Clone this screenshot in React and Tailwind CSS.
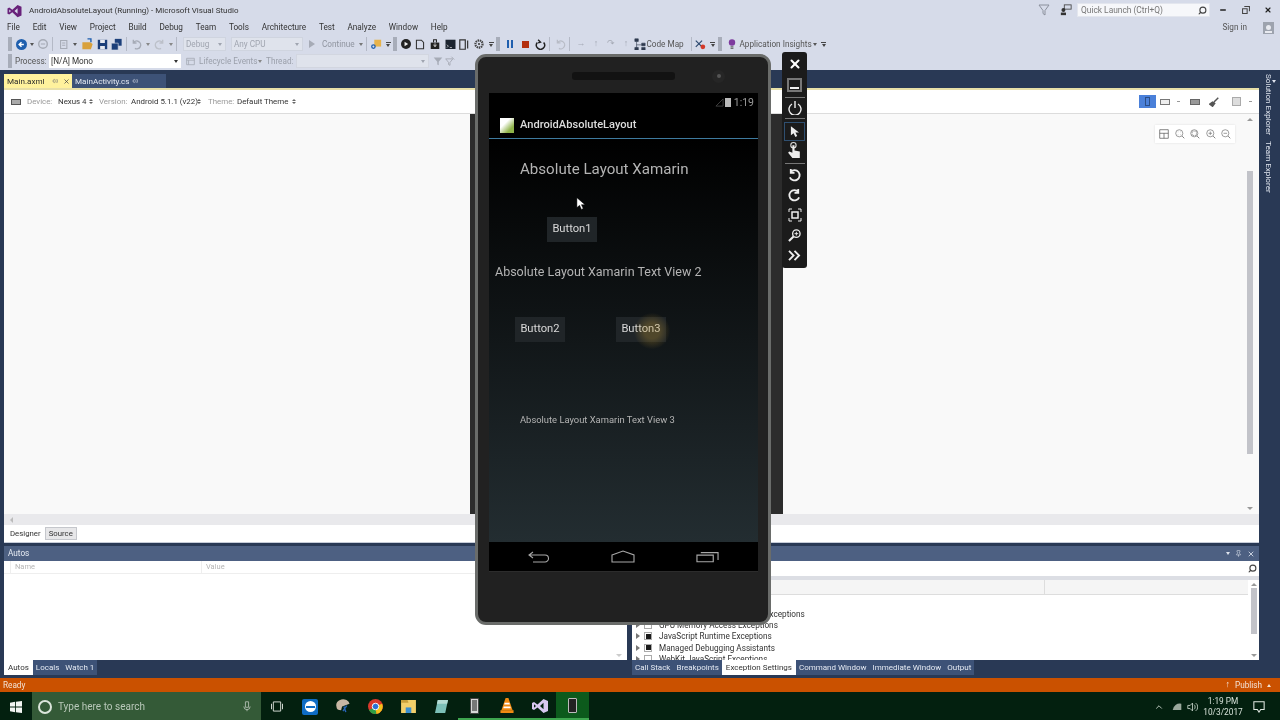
import { ChevronUp, Search, Pin, X, Minus } from 'lucide-react';

// small dropdown caret used all over the VS toolbars
function Caret({ className = 'ml-[3px]', color = 'border-t-[#555]' }) {
  return <span className={`${className} inline-block shrink-0 w-0 h-0 border-x-[2.5px] border-x-transparent border-t-[3px] ${color}`} />;
}

function OverflowCaret({ className = '' }) {
  return (
    <span className={`flex flex-col items-center gap-[1px] w-[6px] shrink-0 ${className}`}>
      <span className="w-[5px] h-[1px] bg-[#444]" />
      <Caret className="" color="border-t-[#444]" />
    </span>
  );
}

function Grip({ className = '' }) {
  return <span className={`w-[4px] h-[14px] shrink-0 bg-[radial-gradient(#a4aab6_0.7px,transparent_0.8px)] bg-[length:2px_2px] ${className}`} />;
}

function Sep({ className = '' }) {
  return <span className={`w-px h-[14px] bg-[#b4b9c6] shrink-0 ${className}`} />;
}

// size always comes from the caller
function Glyph({ className = '', children, box = '0 0 14 14' }) {
  return (
    <svg viewBox={box} className={`shrink-0 ${className}`}>
      {children}
    </svg>
  );
}

function UpDown({ className = 'ml-[5px]' }) {
  return (
    <span className={`flex flex-col gap-[1px] shrink-0 ${className}`}>
      <span className="w-0 h-0 border-x-[2px] border-x-transparent border-b-[2px] border-b-[#666]" />
      <span className="w-0 h-0 border-x-[2px] border-x-transparent border-t-[2px] border-t-[#666]" />
    </span>
  );
}

function VsLogo({ className = '', fill = '#68217a' }) {
  return (
    <svg viewBox="0 0 16 16" className={className}>
      <path fill={fill} d="M11.5 1 16 3v10l-4.5 2-6-5.6L2 12l-2-1V5l2-1 3.5 2.6zM2 6.2v3.6L4 8zm9.5-1.4L8 8l3.500 3.200z" />
    </svg>
  );
}

function TitleBar() {
  return (
    <div className="h-[20px] flex items-center pl-[7px]">
      <VsLogo className="w-[15px] h-[14px] mt-[2px]" />
      <span className="ml-[7px] mt-[3px] text-[8.030px] text-[#333]">AndroidAbsoluteLayout (Running) - Microsoft Visual Studio</span>
      <div className="ml-auto flex items-center">
        <Glyph className="mr-[9px] w-[14px] h-[14px]">
          <path d="M2 2h10L8 7.500V12L6 10.500V7.500z" fill="none" stroke="#8b909c" />
        </Glyph>
        <Glyph className="mr-[5px] w-[12px] h-[12px]">
          <rect x="5" y="1" width="8" height="5" fill="none" stroke="#444" />
          <circle cx="4" cy="7" r="2.300" fill="#333" />
          <rect x="1" y="10" width="6" height="3" fill="#333" />
        </Glyph>
        <div className="w-[133px] h-[14px] bg-[#f6f7fa] border border-[#e3e6ee] flex items-center pl-[3px] pr-[2px] text-[8.400px] text-[#777]">
          Quick Launch (Ctrl+Q)
          <Search className="ml-auto w-[9px] h-[9px] text-[#444] -scale-x-100" strokeWidth={3} />
        </div>
        <Minus className="ml-[9px] w-[8px] h-[8px] text-[#222]" strokeWidth={4} />
        <Glyph className="ml-[15px] w-[8px] h-[8px]">
          <path d="M4 1h9v8M1 5h8v8H1z" fill="none" stroke="#444" strokeWidth="1.800" />
        </Glyph>
        <X className="ml-[14px] mr-[8px] w-[8px] h-[8px] text-[#222]" strokeWidth={3.500} />
      </div>
    </div>
  );
}

const menus = ['File', 'Edit', 'View', 'Project', 'Build', 'Debug', 'Team', 'Tools', 'Architecture', 'Test', 'Analyze', 'Window', 'Help'];

function MenuBar() {
  return (
    <div className="h-[15px] flex items-center pl-[7px] text-[8.200px] text-[#333]">
      <div className="flex gap-[12.800px]">
        {menus.map((m) => <span key={m}>{m}</span>)}
      </div>
      <span className="ml-auto text-[#555]">Sign in</span>
      <span className="ml-[16px] mr-[6px] w-[11px] h-[12px] bg-[#9da3ae] flex flex-col items-center justify-end">
        <span className="w-[5px] h-[5px] rounded-full bg-[#e8eaf0] mb-[1px]" />
        <span className="w-[7px] h-[2px] bg-[#e8eaf0] mb-[1px]" />
      </span>
    </div>
  );
}

function Combo({ className = '', children }) {
  return (
    <div className={`h-[14px] bg-[#dfe3ec] border border-[#cfd4df] flex items-center pl-[2px] pr-[3px] text-[#a0a5b0] shrink-0 ${className}`}>
      {children}
      <Caret className="ml-auto" color="border-t-[#a0a5b0]" />
    </div>
  );
}

function Toolbar() {
  return (
    <div className="h-[16px] mt-[1px] flex items-center pl-[8px] text-[8.200px] text-[#555]">
      <Grip />
      <Glyph className="ml-[3.500px] w-[11px] h-[11px]">
        <circle cx="7" cy="7" r="7" fill="#1f5fae" />
        <path d="M10 7H4.500M7 4 4 7l3 3" stroke="#fff" strokeWidth="1.800" fill="none" />
      </Glyph>
      <Caret className="ml-[3px]" />
      <Glyph className="ml-[4.500px] w-[10px] h-[10px]">
        <circle cx="7" cy="7" r="6" fill="none" stroke="#a6abb6" strokeWidth="2" />
        <path d="M4 7h6" stroke="#a6abb6" strokeWidth="1.500" />
      </Glyph>
      <Sep className="ml-[4px]" />
      <Glyph className="ml-[5.500px] w-[11px] h-[11px]">
        <path d="M2 2h8v10H2zM4 5h4M4 8h4" fill="none" stroke="#a6abb6" strokeWidth="1.400" />
      </Glyph>
      <Caret className="ml-[3px]" />
      <Glyph className="ml-[4px] w-[13px] h-[12px]">
        <path d="M1 5h9l3 2-2 6H1z" fill="#d9a13c" />
        <path d="M7 1 11 1v4" fill="none" stroke="#1f5fae" strokeWidth="1.600" />
      </Glyph>
      <Glyph className="ml-[3px] w-[11px] h-[11px]">
        <path d="M1 1h12v12H1z" fill="#1c3f7a" />
        <path d="M4 1h6v4H4zM4 9h6v4H4z" fill="#e7eaf1" />
      </Glyph>
      <Glyph className="ml-[2px] w-[13px] h-[12px]">
        <path d="M5 1h8v8H5z" fill="#1c3f7a" />
        <path d="M1 6h8v8H1z" fill="#1c3f7a" stroke="#e0e4ec" strokeWidth=".7" />
      </Glyph>
      <Sep className="ml-[3.500px]" />
      <Glyph className="ml-[3.500px] w-[11px] h-[11px]">
        <path d="M3 5a5 5 0 1 1 2 7M3 1v4h4" fill="none" stroke="#a6abb6" strokeWidth="1.800" />
      </Glyph>
      <Caret className="ml-[4px]" color="border-t-[#888]" />
      <Glyph className="ml-[4px] w-[11px] h-[11px]">
        <path d="M11 5a5 5 0 1 0-2 7M11 1v4H7" fill="none" stroke="#bcc0c9" strokeWidth="1.800" />
      </Glyph>
      <Caret className="ml-[4px]" color="border-t-[#888]" />
      <Sep className="ml-[3.500px]" />
      <Combo className="ml-[6px] w-[43px]">Debug</Combo>
      <Combo className="ml-[5px] w-[72px]">Any CPU</Combo>
      <span className="ml-[6px] shrink-0 w-0 h-0 border-y-[4px] border-y-transparent border-l-[6px] border-l-[#a6abb6]" />
      <span className="ml-[7px] w-[33px] shrink-0 text-[#8f949f]">Continue</span>
      <Caret className="ml-[3.500px]" color="border-t-[#777]" />
      <Sep className="ml-[3.500px]" />
      <Glyph className="ml-[3px] w-[12px] h-[12px]">
        <path d="M5 2h8v8H5z" fill="#e7b34a" />
        <circle cx="4" cy="10" r="2" fill="none" stroke="#1f5fae" strokeWidth="1.500" />
      </Glyph>
      <OverflowCaret className="ml-[3px]" />
      <Grip className="ml-[2px]" />
      <Glyph className="ml-[4px] w-[10px] h-[10px]">
        <circle cx="7" cy="7" r="7" fill="#222" />
        <path d="M5 4l5 3-5 3z" fill="#eee" />
      </Glyph>
      <Glyph className="ml-[4px] w-[10px] h-[11px]">
        <path d="M2 1h7l3 3v9H2z" fill="none" stroke="#333" strokeWidth="1.500" />
      </Glyph>
      <Glyph className="ml-[5px] w-[10px] h-[10px]">
        <path d="M1 5h12v9H1z" fill="#222" />
        <path d="M5 5V1h4v4" fill="none" stroke="#222" strokeWidth="1.500" />
        <path d="M7 6v4M5 8l2 3 2-3" stroke="#fff" fill="none" />
      </Glyph>
      <Glyph className="ml-[4.500px] w-[11px] h-[10px]">
        <rect width="14" height="13" y="1" fill="#1c2430" />
        <path d="M2 8l2 2-2 2M6 12h3" stroke="#eee" fill="none" />
      </Glyph>
      <Glyph className="ml-[3px] w-[11px] h-[11px]">
        <path d="M1 1h7v12H1zM11 2v10" fill="none" stroke="#333" strokeWidth="1.500" />
      </Glyph>
      <Glyph className="ml-[4.500px] w-[10px] h-[10px]">
        <circle cx="7" cy="7" r="5" fill="none" stroke="#444" strokeWidth="3" strokeDasharray="2 1" />
        <circle cx="7" cy="7" r="1.500" fill="#444" />
      </Glyph>
      <OverflowCaret className="ml-[4px]" />
      <Grip className="ml-[2px]" />
      <span className="ml-[7px] flex gap-[2px] shrink-0">
        <span className="w-[2px] h-[8px] bg-[#1f5fae]" />
        <span className="w-[2px] h-[8px] bg-[#1f5fae]" />
      </span>
      <span className="ml-[8.500px] w-[7px] h-[7px] bg-[#b3300f] shrink-0" />
      <Glyph className="ml-[6px] w-[11px] h-[11px]">
        <path d="M3 4.500a5.200 5.200 0 1 0 8 0M4 1l3 3-3 1" fill="none" stroke="#222" strokeWidth="1.800" />
      </Glyph>
      <Sep className="ml-[3.500px]" />
      <Glyph className="ml-[4.500px] w-[11px] h-[11px]">
        <path d="M3 5a5 5 0 1 1 2 7M3 1v4h4" fill="none" stroke="#b8bcc6" strokeWidth="1.600" />
      </Glyph>
      <Sep className="ml-[3.500px]" />
      <span className="ml-[3.500px] w-[60px] shrink-0 grid grid-cols-4 justify-items-center text-[#a6abb6] text-[9px]">
        <span>→</span><span>↑</span><span>↷</span><span>↑</span>
      </span>
      <Glyph className="w-[12px] h-[12px]">
        <path d="M1 1h4v3H1zM9 6h4v3H9zM1 11h4v3H1zM9 11h4v3H9zM3 4v9M3 8h6" fill="#2f3a4f" stroke="#2f3a4f" strokeWidth=".7" />
      </Glyph>
      <span className="ml-[1px] w-[36px] shrink-0 whitespace-nowrap text-[#555]">Code Map</span>
      <Sep className="ml-[8px]" />
      <Glyph className="ml-[3.500px] w-[11px] h-[11px]">
        <path d="M1 2l8 8M9 2l-8 8" stroke="#2d4a70" strokeWidth="1.500" />
        <circle cx="10" cy="10" r="3" fill="#d33a2a" />
      </Glyph>
      <OverflowCaret className="ml-[3.500px]" />
      <Grip className="ml-[2px]" />
      <Glyph className="ml-[5px] w-[10px] h-[12px]">
        <circle cx="7" cy="5" r="4.500" fill="#7d3a9e" />
        <path d="M5 11h4M5 13h4" stroke="#555" strokeWidth="1.400" />
      </Glyph>
      <span className="ml-[3px] w-[70px] shrink-0 whitespace-nowrap text-[#555]">Application Insights</span>
      <Caret className="ml-[3.500px]" />
      <OverflowCaret className="ml-[3.500px]" />
    </div>
  );
}

function ProcessBar() {
  return (
    <div className="h-[14px] mt-[2px] flex items-center pl-[8px] text-[8.200px] text-[#555]">
      <Grip />
      <span className="ml-[3px] w-[29px] shrink-0">Process:</span>
      <div className="ml-[5px] w-[132px] h-[14px] bg-white flex items-center pl-[2px] pr-[3px] text-[#333] shrink-0">
        [N/A] Mono
        <Caret className="ml-auto" color="border-t-[#333]" />
      </div>
      <Glyph className="ml-[5px] w-[9px] h-[9px]">
        <path d="M1 2h12v10H1zM1 5h12M4 5v7" fill="none" stroke="#a6abb6" strokeWidth="1.300" />
      </Glyph>
      <span className="ml-[4px] w-[55px] shrink-0 whitespace-nowrap text-[#9ba0ab]">Lifecycle Events</span>
      <Caret className="ml-[3.500px]" color="border-t-[#888]" />
      <span className="ml-[4.500px] w-[26px] shrink-0 text-[#9ba0ab]">Thread:</span>
      <div className="ml-[4px] w-[133px] h-[14px] bg-[#dfe3ec] border border-[#d2d6e0] flex items-center pr-[3px] shrink-0">
        <Caret className="ml-auto" color="border-t-[#a0a5b0]" />
      </div>
      <Glyph className="ml-[4px] w-[10px] h-[10px]">
        <path d="M1 2h12L8 8v5L6 12V8z" fill="#a6abb6" />
      </Glyph>
      <Glyph className="ml-[2px] w-[10px] h-[10px]">
        <path d="M1 4h10L7 9v4L5 12V9zM9 1l4 4" fill="none" stroke="#a6abb6" strokeWidth="1.300" />
      </Glyph>
    </div>
  );
}

function Tabs() {
  return (
    <div className="h-[18px] bg-[#293955] flex items-end pl-[4px] pr-[23px] text-[8.100px]">
      <div className="w-[68px] h-[14px] bg-[#fff29d] flex items-center pl-[3px] text-[#2b2b2b]">
        <span className="w-[39px]">Main.axml</span>
        <Pin className="ml-[6px] w-[6px] h-[6px] text-[#777] rotate-90" />
        <X className="ml-[5px] w-[7px] h-[7px] text-[#444]" strokeWidth={2.500} />
      </div>
      <div className="w-[94px] h-[14px] bg-[#3d5277] flex items-center pl-[3px] text-[#e4e9f2]">
        <span className="w-[55px]">MainActivity.cs</span>
        <Pin className="ml-[2px] w-[6px] h-[6px] text-[#d5dbe7] rotate-90" />
      </div>
      <Caret className="ml-auto mb-[5px] mr-[-19px]" color="border-t-[#dfe4ee]" />
    </div>
  );
}

function DesignBar() {
  return (
    <div className="h-[26px] bg-white border-t-2 border-[#e8e0a8] border-b border-b-[#dcdcdc] flex items-center pl-[7px] pr-[7.500px] text-[7.900px] text-[#333] whitespace-nowrap">
      <span className="w-[10px] h-[6px] border border-[#555] bg-[#aaa] shrink-0" />
      <span className="ml-[6px] w-[23px] shrink-0 text-[#999]">Device:</span>
      <span className="ml-[8px] w-[27px] shrink-0">Nexus 4</span>
      <UpDown className="ml-[4px]" />
      <span className="ml-[6px] w-[27px] shrink-0 text-[#999]">Version:</span>
      <span className="ml-[5px] w-[63px] shrink-0">Android 5.1.1 (v22)</span>
      <UpDown className="ml-[3px]" />
      <span className="ml-[7px] w-[24px] shrink-0 text-[#999]">Theme:</span>
      <span className="ml-[5px] w-[49px] shrink-0">Default Theme</span>
      <UpDown className="ml-[6px]" />
      <div className="ml-auto flex items-center">
        <span className="w-[17px] h-[13px] bg-[#4a80d9] flex items-center justify-center">
          <span className="w-[5px] h-[9px] border border-[#2a4d85]" />
        </span>
        <span className="ml-[4px] w-[10px] h-[6px] border border-[#777] bg-[#eee]" />
        <span className="ml-[7px] w-[3px] h-px bg-[#999]" />
        <span className="ml-[10px] w-[10px] h-[6px] border border-[#666] bg-[#999]" />
        <Glyph className="ml-[9px] w-[10px] h-[10px]">
          <path d="M13 1 7 7M8 9l-3 4-4-3 4-3z" stroke="#555" strokeWidth="2" fill="#555" />
        </Glyph>
        <span className="ml-[12.500px] w-[9px] h-[9px] border border-[#aaa] bg-[#ddd]" />
        <span className="ml-[8px] w-[3px] h-px bg-[#999]" />
      </div>
    </div>
  );
}

function ZoomGlyph({ mark }) {
  return (
    <svg viewBox="0 0 14 14" className="w-[10px] h-[10px]">
      <circle cx="6" cy="6" r="5" fill="none" stroke="#777" />
      <path d="m10 10 3 3" stroke="#777" strokeWidth="1.300" />
      {mark}
    </svg>
  );
}

function Canvas() {
  return (
    <div className="relative flex-1 min-h-0 bg-[#f9f9f9] flex">
      <div className="ml-[466px] w-[313px] bg-[#2c2c2c]" />
      <div className="absolute right-[24px] top-[11px] w-[80px] h-[18px] bg-white shadow-[0_0_2px_#ddd] flex items-center justify-between px-[4px]">
        <svg viewBox="0 0 14 14" className="w-[10px] h-[10px]">
          <path d="M1 1h12v12H1zM1 6h12M7 6v7" fill="none" stroke="#555" />
        </svg>
        <ZoomGlyph mark={<path d="M4 4h.5M7.500 4h.5M4 8h.5M7.500 8h.5" stroke="#777" />} />
        <ZoomGlyph mark={<path d="M3 3h6v6H3z" fill="none" stroke="#777" strokeDasharray="2 1" />} />
        <ZoomGlyph mark={<path d="M3.500 6h5M6 3.500v5" stroke="#777" />} />
        <ZoomGlyph mark={<path d="M3.500 6h5" stroke="#777" />} />
      </div>
      <div className="ml-auto mr-[4px] w-[10px] flex flex-col items-center py-[4px]">
        <span className="w-0 h-0 border-x-[3px] border-x-transparent border-b-[3px] border-b-[#999]" />
        <span className="mt-[50px] w-[6px] h-[283px] bg-[#c2c3c9]" />
        <span className="mt-auto w-0 h-0 border-x-[3px] border-x-transparent border-t-[3px] border-t-[#999]" />
      </div>
    </div>
  );
}

function Document() {
  return (
    <div className="h-[455px] ml-[4px] mr-[21px] flex flex-col bg-white">
      <DesignBar />
      <Canvas />
      <div className="h-[11px] bg-[#e9e9ec] flex items-center pl-[6px]">
        <span className="w-0 h-0 border-y-[3px] border-y-transparent border-r-[3px] border-r-[#bbb]" />
      </div>
      <div className="h-[18px] pt-[2px] flex items-start text-[7.800px] text-[#333] bg-white border-b border-[#c6ccd8]">
        <span className="h-[14px] pl-[6px] pr-[4px] flex items-center">Designer</span>
        <span className="h-[13px] px-[3px] bg-[#e7e7e9] border border-[#c5c7cc] flex items-center">Source</span>
      </div>
    </div>
  );
}

function SideTabs() {
  return (
    <div className="w-[21px] pt-[4px] pl-[4px] flex flex-col items-start gap-[6px] text-[8.100px] text-[#dfe4ee]">
      <span className="[writing-mode:vertical-rl]">Solution Explorer</span>
      <span className="[writing-mode:vertical-rl]">Team Explorer</span>
    </div>
  );
}

const exceptionRows = [
  ['Common Language Runtime Exceptions', false],
  ['GPU Memory Access Exceptions', false],
  ['JavaScript Runtime Exceptions', true],
  ['Managed Debugging Assistants', true],
  ['WebKit JavaScript Exceptions', false],
];

function PanelHead({ title, controls }) {
  return (
    <div className="h-[15px] bg-[#4d6082] flex items-center px-[4px] text-[8.200px] text-[#e8ecf4]">
      {title}
      {controls}
    </div>
  );
}

function BottomTab({ active, children }) {
  return (
    <span className={`h-[15px] flex items-center ${active ? 'px-[4px] bg-white text-[#333]' : 'px-[3px] bg-[#3d5277] text-[#e4e9f2]'}`}>
      {children}
    </span>
  );
}

function AutosPanel() {
  return (
    <div className="w-[623px] flex flex-col">
      <PanelHead title="Autos" />
      <div className="h-[99px] bg-white flex flex-col relative">
        <div className="h-[13px] flex items-center border-b border-[#eee] text-[7.500px] text-[#b5b5b5]">
          <span className="ml-[6px] w-[191px] pl-[4px] border-l border-[#eee]">Name</span>
          <span className="pl-[4px] border-l border-[#eee]">Value</span>
        </div>
        <span className="absolute right-[5px] bottom-[3px] w-0 h-0 border-x-[3px] border-x-transparent border-t-[3px] border-t-[#ccc]" />
      </div>
      <div className="flex text-[8px]">
        <BottomTab active>Autos</BottomTab>
        <BottomTab>Locals</BottomTab>
        <BottomTab>Watch 1</BottomTab>
      </div>
    </div>
  );
}

function ExceptionPanel() {
  return (
    <div className="w-[627px] ml-[5px] flex flex-col">
      <PanelHead
        controls={
          <div className="ml-auto flex items-center gap-[5px] text-[#dfe4ee]">
            <Caret className="" color="border-t-[#dfe4ee]" />
            <Pin className="w-[7px] h-[7px]" />
            <X className="w-[8px] h-[8px]" strokeWidth={2.500} />
          </div>
        }
      />
      <div className="h-[99px] bg-white flex flex-col">
        <div className="h-[15px] flex items-center pr-[2px]">
          <Search className="ml-auto w-[9px] h-[9px] text-[#444] -scale-x-100" strokeWidth={3} />
        </div>
        <div className="h-[4px] bg-[#dcdee4]" />
        <div className="flex flex-1 min-h-0">
          <div className="flex-1 min-w-0 flex flex-col">
            <div className="h-[15px] shrink-0 bg-[#f5f5f5] border-b border-[#ddd] flex justify-end">
              <span className="w-[204px] border-l border-[#ddd]" />
            </div>
            <div className="flex-1 min-h-0 overflow-hidden pt-[13px] text-[8.200px] text-[#333]">
              {exceptionRows.map(([name, on]) => (
                <div key={name} className="h-[11.400px] flex items-center pl-[4px] whitespace-nowrap">
                  <span className="w-0 h-0 border-y-[3px] border-y-transparent border-l-[4px] border-l-[#777]" />
                  <span className="ml-[4px] w-[8px] h-[8px] border border-[#aaa] flex items-center justify-center">
                    {on && <span className="w-[5px] h-[5px] bg-[#1a1a1a]" />}
                  </span>
                  <span className="ml-[7px]">{name}</span>
                </div>
              ))}
            </div>
          </div>
          <div className="w-[11px] flex flex-col items-center py-[3px]">
            <span className="w-0 h-0 border-x-[3px] border-x-transparent border-b-[3px] border-b-[#999]" />
            <span className="mt-[2px] w-[6px] h-[46px] bg-[#c2c3c9]" />
            <span className="mt-auto w-0 h-0 border-x-[3px] border-x-transparent border-t-[3px] border-t-[#999]" />
          </div>
        </div>
      </div>
      <div className="flex text-[8px]">
        <BottomTab>Call Stack</BottomTab>
        <BottomTab>Breakpoints</BottomTab>
        <BottomTab active>Exception Settings</BottomTab>
        <BottomTab>Command Window</BottomTab>
        <BottomTab>Immediate Window</BottomTab>
        <BottomTab>Output</BottomTab>
      </div>
    </div>
  );
}

function StatusBar() {
  return (
    <div className="h-[14px] bg-[#ca5100] flex items-center pl-[3px] pr-[9px] text-[8.200px] text-[#f3e2d5]">
      Ready
      <span className="ml-auto mr-[5px] text-[9px]">↑</span>
      Publish
      <span className="ml-[5px] w-0 h-0 border-x-[2.500px] border-x-transparent border-b-[3px] border-b-[#f3e2d5]" />
    </div>
  );
}

function TaskIcon({ className = '', children }) {
  return <span className={`w-[32.800px] h-[28px] pt-[1px] flex items-center justify-center shrink-0 ${className}`}>{children}</span>;
}

function Taskbar() {
  return (
    <div className="h-[28px] bg-[#03200f] flex items-center text-[10px]">
      <span className="w-[32px] h-full pt-[1px] flex items-center justify-center">
        <svg viewBox="0 0 14 14" className="w-[12px] h-[12px]">
          <path fill="#f2f5f2" d="M0 2l6-1v5.500H0zM7 1l7-1v6.500H7zM0 7.500h6V13l-6-1zM7 7.500h7V14l-7-1z" />
        </svg>
      </span>
      <div className="w-[229px] h-full pt-[1px] bg-[#345a37] flex items-center pl-[6px] text-[#b9c8b9]">
        <span className="w-[14px] h-[14px] rounded-full border-2 border-[#dbe5db]" />
        <span className="ml-[6px]">Type here to search</span>
        <svg viewBox="0 0 10 14" className="ml-auto mr-[10px] w-[8px] h-[11px]">
          <path d="M3 1h4v7H3zM1 7a4 4 0 0 0 8 0M5 11v2" fill="none" stroke="#aab8aa" strokeWidth="1.200" />
        </svg>
      </div>
      <div className="flex items-center">
        <TaskIcon>
          <svg viewBox="0 0 14 12" className="w-[14px] h-[11px]">
            <path d="M3 1h8v10H3zM1 3v6M13 3v6" fill="none" stroke="#dfe6df" />
          </svg>
        </TaskIcon>
        <TaskIcon>
          <span className="w-[16px] h-[16px] rounded-[2px] bg-[#0e6cc4] flex items-center justify-center">
            <span className="w-[11px] h-[11px] rounded-full bg-white flex items-center justify-center">
              <span className="w-[9px] h-[2px] bg-[#0e6cc4]" />
            </span>
          </span>
        </TaskIcon>
        <TaskIcon>
          <svg viewBox="0 0 16 16" className="w-[16px] h-[15px]">
            <path d="M1 8a7 6 0 0 1 14-3L7 8l-1 4C3 12 1 11 1 8z" fill="#c9b7a4" />
            <path d="M9 8l2 6M12 7l-4 6" stroke="#2864b4" strokeWidth="1.500" />
          </svg>
        </TaskIcon>
        <TaskIcon>
          <svg viewBox="0 0 16 16" className="w-[15px] h-[15px]">
            <circle cx="8" cy="8" r="8" fill="#d9382c" />
            <path d="M8 8 1 12a8 8 0 0 0 8 4z" fill="#2f9e44" />
            <path d="M8 8l7-3a8 8 0 0 1-6 11z" fill="#f2c21a" />
            <circle cx="8" cy="8" r="3.500" fill="#2a71d6" stroke="#fff" />
          </svg>
        </TaskIcon>
        <TaskIcon>
          <svg viewBox="0 0 16 14" className="w-[15px] h-[13px]">
            <path d="M0 0h16v14H0z" fill="#f2cf6a" />
            <path d="M0 0h7l1 3H0z" fill="#c9a13c" />
            <path d="M5 8h6v6H5z" fill="#3a8fd0" />
          </svg>
        </TaskIcon>
        <TaskIcon>
          <svg viewBox="0 0 14 16" className="w-[13px] h-[15px]">
            <path d="M3 1h11l-3 14H0z" fill="#7cc0b8" />
            <path d="M3 1h11l-1 4H2z" fill="#b4dcd5" />
          </svg>
        </TaskIcon>
        <TaskIcon className="border-b-2 border-[#3ea64f]">
          <span className="w-[9px] h-[16px] bg-[#d7d7d7] border border-[#444] rounded-[1px] flex items-center justify-center">
            <span className="w-[5px] h-[11px] bg-[#777]" />
          </span>
        </TaskIcon>
        <TaskIcon className="border-b-2 border-[#3ea64f]">
          <svg viewBox="0 0 14 16" className="w-[14px] h-[15px]">
            <path d="M5.500 0h3L13 13H1z" fill="#f08a12" />
            <path d="M4.500 5h5l.5 2H4zM3.500 9h7l.5 2H3z" fill="#fff" />
            <path d="M0 13h14v3H0z" fill="#f08a12" />
          </svg>
        </TaskIcon>
        <TaskIcon className="border-b-2 border-[#3ea64f]">
          <VsLogo className="w-[16px] h-[16px]" fill="#d8c8f0" />
        </TaskIcon>
        <TaskIcon className="bg-[#0c5a1c] border-b-2 border-[#3ea64f]">
          <span className="w-[9px] h-[15px] bg-[#222] border border-[#bbb] rounded-[1px]" />
        </TaskIcon>
      </div>
      <div className="ml-auto pt-[1px] flex items-center text-[#d7e2d9] text-[8.300px]">
        <ChevronUp className="w-[10px] h-[10px]" strokeWidth={2} />
        <svg viewBox="0 0 14 12" className="ml-[8px] w-[10px] h-[9px]">
          <path d="M1 11 A10 10 0 0 1 13 2v9z" fill="#9aa89c" />
        </svg>
        <svg viewBox="0 0 14 12" className="ml-[5px] w-[11px] h-[10px]">
          <path d="M1 4h3l3-3v10L4 8H1zM9 3a4 4 0 0 1 0 6M11 1a6 6 0 0 1 0 10" fill="none" stroke="#d7e2d9" />
        </svg>
        <div className="ml-[6px] w-[38px] flex flex-col items-center leading-[11px]">
          <span>1:19 PM</span>
          <span>10/3/2017</span>
        </div>
        <svg viewBox="0 0 14 14" className="ml-[11px] mr-[15px] w-[12px] h-[12px]">
          <path d="M1 1h12v9H9l-2 3-2-3H1z" fill="none" stroke="#e3eae4" strokeWidth="1.200" />
        </svg>
      </div>
    </div>
  );
}

function DroidButton({ className = '', children }) {
  return (
    <span className={`w-[50px] h-[25px] bg-[#202528] flex items-center justify-center pb-[1px] text-[11.200px] text-[#d8d8d8] ${className}`}>
      {children}
    </span>
  );
}

function Emulator() {
  return (
    <div className="absolute left-[475px] top-[54px] w-[296px] h-[571px] bg-[#212121] border-[3px] border-[#6a6c6a] rounded-[11px] flex flex-col items-center font-['Roboto',sans-serif]">
      <div className="h-[36px] w-full relative shrink-0">
        <span className="absolute left-[94px] top-[15px] w-[103px] h-[8px] rounded-[3px] bg-[#121212]" />
        <span className="absolute left-[234px] top-[13px] w-[13px] h-[13px] rounded-full bg-[#262626]">
          <span className="block ml-[5px] mt-[4px] w-[4px] h-[4px] rounded-full bg-[#555]" />
        </span>
      </div>
      <div className="w-[269px] h-[479px] flex flex-col ml-[1px]">
        <div className="h-[19px] bg-black flex items-center justify-end pr-[4px] text-[10.500px] text-[#9b9b9b]">
          <svg viewBox="0 0 10 10" className="w-[9px] h-[9px]"><path d="M1 9 9 1v8z" fill="none" stroke="#444" /></svg>
          <span className="ml-[1px] w-[6px] h-[9px] bg-[#bbb]" />
          <span className="ml-[3px]">1:19</span>
        </div>
        <div className="h-[27px] bg-black border-b border-[#3e7a9e] flex items-center pl-[11px] text-[11.100px] font-medium text-[#dcdcdc]">
          <span className="w-[14px] h-[15px] bg-[linear-gradient(135deg,#fff_35%,#8fb34a_75%)]" />
          <span className="ml-[6px]">AndroidAbsoluteLayout</span>
        </div>
        <div className="relative flex-1 min-h-0 bg-[linear-gradient(#000,#232d31)] text-[#b4b4b4]">
          <div className="ml-[31px] mt-[20px] text-[15.100px] leading-[20px]">Absolute Layout Xamarin</div>
          <DroidButton className="ml-[58px] mt-[38px]">Button1</DroidButton>
          <div className="ml-[6px] mt-[22px] text-[12.500px] leading-[16px]">Absolute Layout Xamarin Text View 2</div>
          <div className="flex ml-[26px] mt-[37px] gap-[51px]">
            <DroidButton>Button2</DroidButton>
            <DroidButton>Button3</DroidButton>
          </div>
          <div className="ml-[31px] mt-[72px] text-[9.400px] leading-[12px]">Absolute Layout Xamarin Text View 3</div>
          <span className="absolute left-[145px] top-[174px] w-[36px] h-[36px] rounded-full bg-[radial-gradient(circle,rgba(190,150,50,.3)_30%,rgba(190,150,50,0)_72%)]" />
          <svg viewBox="0 0 10 14" className="absolute left-[87px] top-[58px] w-[9px] h-[14px]">
            <path d="M1 0v11l3-2.500 2 4.500 2-1-2-4.300h4z" fill="#fff" stroke="#000" strokeWidth=".5" />
          </svg>
        </div>
        <div className="h-[30px] bg-black border-b border-[#2c2c2c] flex items-center justify-around px-[8px]">
          <svg viewBox="0 0 22 12" className="w-[22px] h-[12px]">
            <path d="M5 1 1 4l4 3M1 4h16a3.500 3.500 0 0 1 0 7H5" fill="none" stroke="#a8a8a8" strokeWidth="1.100" />
          </svg>
          <svg viewBox="0 0 24 13" className="w-[24px] h-[13px]">
            <path d="M1 5 12 1l11 4v7H1z" fill="none" stroke="#a8a8a8" strokeWidth="1.100" />
          </svg>
          <svg viewBox="0 0 24 12" className="w-[23px] h-[12px]">
            <path d="M1 4h17v7H1zM5 1.500h18V9" fill="none" stroke="#a8a8a8" strokeWidth="1.200" />
          </svg>
        </div>
      </div>
    </div>
  );
}

function Divider({ className = '' }) {
  return <span className={`block shrink-0 w-[20px] h-px bg-[#777] ${className}`} />;
}

function SideTools() {
  return (
    <div className="absolute left-[782px] top-[52px] w-[25px] h-[216px] bg-[#1b1b1b] rounded-[3px] flex flex-col items-center pt-[5px]">
      <X className="w-[14px] h-[14px] text-white shrink-0" strokeWidth={3.500} />
      <span className="mt-[7px] w-[15px] h-[14px] shrink-0 border-2 border-[#777] flex items-end justify-center pb-[1px]">
        <span className="w-[9px] h-[2px] bg-[#eee]" />
      </span>
      <Divider className="mt-[5px]" />
      <svg viewBox="0 0 14 14" className="mt-[3px] w-[14px] h-[14px] shrink-0">
        <path d="M4 3a6 6 0 1 0 6 0M7 0v7" fill="none" stroke="#eee" strokeWidth="1.400" />
      </svg>
      <Divider className="mt-[3px]" />
      <span className="mt-[3px] w-[21px] h-[19px] shrink-0 border border-[#2f4f70] flex items-center justify-center">
        <svg viewBox="0 0 10 13" className="w-[9px] h-[12px]"><path d="M1 0v10l3-2 2 4 2-1-2-4h4z" fill="#eee" /></svg>
      </span>
      <svg viewBox="0 0 14 16" className="mt-[1px] w-[15px] h-[17px] shrink-0">
        <circle cx="6" cy="3" r="2.500" fill="none" stroke="#ddd" />
        <path d="M5 3h2v5l5 1v6H5L1 10l1-1 3 1z" fill="#eee" />
      </svg>
      <Divider className="mt-[4px]" />
      <svg viewBox="0 0 14 14" className="mt-[5px] w-[13px] h-[13px] shrink-0">
        <path d="M3 3a5.500 5.500 0 1 1-1 6M3 0v4h4" fill="none" stroke="#eee" strokeWidth="2" />
      </svg>
      <svg viewBox="0 0 14 14" className="mt-[7px] w-[13px] h-[13px] shrink-0">
        <path d="M11 3a5.500 5.500 0 1 0 1 6M11 0v4H7" fill="none" stroke="#eee" strokeWidth="2" />
      </svg>
      <svg viewBox="0 0 14 14" className="mt-[6px] w-[14px] h-[14px] shrink-0">
        <path d="M1 4V1h3M10 1h3v3M13 10v3h-3M4 13H1v-3" fill="none" stroke="#eee" />
        <rect x="4" y="4" width="6" height="6" fill="none" stroke="#eee" strokeWidth="1.500" />
      </svg>
      <svg viewBox="0 0 14 14" className="mt-[6.500px] w-[13px] h-[13px] shrink-0">
        <circle cx="9" cy="5" r="4" fill="none" stroke="#eee" strokeWidth="1.400" />
        <path d="M6 8 1 13" stroke="#eee" strokeWidth="2.200" />
        <path d="M7 5h4M9 3v4" stroke="#eee" />
      </svg>
      <svg viewBox="0 0 14 12" className="mt-[8px] w-[13px] h-[11px] shrink-0">
        <path d="M1 1l5 5-5 5M7 1l5 5-5 5" fill="none" stroke="#eee" strokeWidth="2" />
      </svg>
    </div>
  );
}

export default function App() {
  return (
    <div className="relative w-[1280px] h-[720px] overflow-hidden flex flex-col bg-[#293955] font-['Roboto',sans-serif] blur-[0.3px]">
      <div className="h-[70px] bg-[#d6dbe9]">
        <TitleBar />
        <MenuBar />
        <Toolbar />
        <ProcessBar />
      </div>
      <Tabs />
      <Document />
      <div className="absolute right-0 top-[70px] h-[200px]"><SideTabs /></div>
      <div className="flex flex-1 pl-[4px] pt-[3px]">
        <AutosPanel />
        <ExceptionPanel />
      </div>
      <div className="h-[3px]" />
      <StatusBar />
      <Taskbar />
      <Emulator />
      <SideTools />
    </div>
  );
}
